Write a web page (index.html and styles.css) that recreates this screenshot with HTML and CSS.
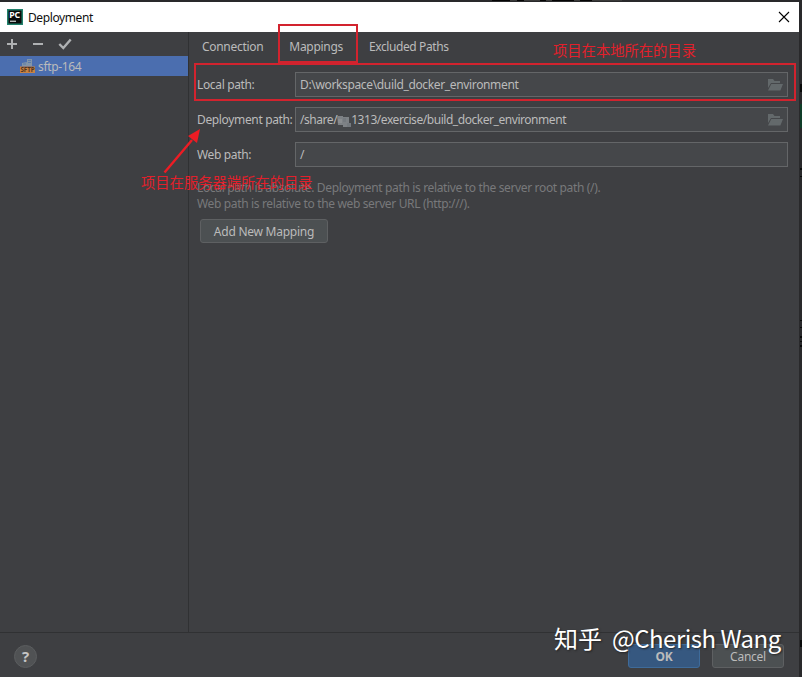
FILE: index.html
```
<!DOCTYPE html>
<html lang="en">
<head>
  <meta charset="UTF-8">
  <meta name="viewport" content="width=device-width, initial-scale=1.0">
  <title>Deployment</title>
  <link rel="stylesheet" href="styles.css">
</head>
<body>
  <div class="window">
    <header class="titlebar">
      <svg class="logo" width="16" height="16" viewBox="0 0 16 16">
        <rect width="16" height="16" fill="#21816c"/>
        <rect x="1.5" y="1.5" width="13" height="13" fill="#080c0b"/>
        <text class="logo-text" x="2.2" y="9" textLength="11" lengthAdjust="spacingAndGlyphs">PC</text>
        <rect x="3" y="11.7" width="6" height="1" fill="#fff"/>
      </svg>
      <h1>Deployment</h1>
      <svg class="close" width="12" height="12" viewBox="0 0 12 12">
        <path d="M1 1l10 10M11 1L1 11" stroke="#000" stroke-width="1.1"/>
      </svg>
    </header>
    <main class="content">
      <aside class="sidebar">
        <div class="toolbar">
          <svg width="12" height="12" viewBox="0 0 12 12"><path d="M6 1v10M1 6h10" stroke="#afb1b3" stroke-width="2"/></svg>
          <svg width="12" height="12" viewBox="0 0 12 12"><path d="M1 6h10" stroke="#afb1b3" stroke-width="2"/></svg>
          <svg width="14" height="12" viewBox="0 0 14 12"><path d="M1.3 6l4 4L12.7 1.5" fill="none" stroke="#afb1b3" stroke-width="2.4"/></svg>
        </div>
        <div class="server">
          <svg width="16" height="16" viewBox="0 0 16 16">
            <path d="M2 5l5-1v4H2zM7 1h5v7H7z" fill="#8295a8"/>
            <path d="M3 6h3M8 2.5h3M8 4.5h3" stroke="#5b7ba9"/>
            <rect y="8.5" width="15" height="6.5" fill="#c78243"/>
            <text class="sftp" x="0.4" y="14.1" textLength="14.2" lengthAdjust="spacingAndGlyphs">SFTP</text>
          </svg>
          <span>sftp-164</span>
        </div>
      </aside>
      <section class="panel">
        <nav class="tabs">
          <span class="tab">Connection</span>
          <span class="tab">Mappings</span>
          <span class="tab">Excluded Paths</span>
        </nav>
        <div class="form">
          <div class="row">
            <label>Local path:</label>
            <div class="field">
              <span>D:\workspace\duild_docker_environment</span>
              <svg width="15" height="12" viewBox="0 0 15 12"><path d="M0 0h5l1.5 2H12v2H3L0 9zM3.3 5H15l-2.6 6.5H0z" fill="#63696b"/></svg>
            </div>
          </div>
          <div class="row">
            <label>Deployment path:</label>
            <div class="field">
              <span class="remote">/share/<svg class="mosaic" width="14" height="13" viewBox="0 0 14 13"><path d="M0 1h6v1h6v10H6v-2H1z" fill="#7d8185"/><path d="M6 3h3v4H6zM10 8h4v4h-4z" fill="#74797e"/><path d="M1 4h4v4H1z" fill="#8a8d90"/></svg>1313/exercise/build_docker_environment</span>
              <svg width="15" height="12" viewBox="0 0 15 12"><path d="M0 0h5l1.5 2H12v2H3L0 9zM3.3 5H15l-2.6 6.5H0z" fill="#63696b"/></svg>
            </div>
          </div>
          <div class="row">
            <label>Web path:</label>
            <div class="field"><span>/</span></div>
          </div>
        </div>
        <p class="hint">Local path is absolute. Deployment path is relative to the server root path (/).<br>Web path is relative to the web server URL (http:///).</p>
        <button class="btn add">Add New Mapping</button>
      </section>
    </main>
    <footer class="footer">
      <button class="help">?</button>
      <button class="btn ok">OK</button>
      <button class="btn cancel">Cancel</button>
    </footer>
  </div>

  <!-- red notes drawn over the dialog -->
  <div class="mark mark-tab"></div>
  <div class="mark mark-row"></div>
  <span class="note note-local">项目在本地所在的目录</span>
  <span class="note note-server">项目在服务器端所在的目录</span>
  <svg class="arrow" width="44" height="48" viewBox="0 0 44 48">
    <path d="M4.5 44.5L32 12" stroke="#ed1c24" stroke-width="2.4"/>
    <path d="M40 1L37 15 28 8z" fill="#ed1c24"/>
  </svg>
  <span class="watermark"><span>知乎</span><span class="author">@Cherish Wang</span></span>

  <!-- pieces of the editor behind the dialog -->
  <svg class="behind behind-right" width="3" height="677" viewBox="0 0 3 677">
    <path d="M1 84h2v8H1zM1 168h2v2H1zM1 176h2v1H1zM1 320h2v1H1zM1 327h2v1H1zM1 336h2v2H1zM1 341h2v1H1zM1 345h2v2H1zM1 640h2v7H1z" fill="#090a0a"/>
    <path d="M1 104h2v24H1z" fill="#103e29"/>
  </svg>
  <svg class="behind behind-top" width="130" height="2" viewBox="0 0 130 2">
    <path d="M0 0h18v1H0zM25 0h7v1h-7zM48 0h6v1h-6zM60 0h22v1H60zM88 0h12v1H88z" fill="#050505"/>
    <path d="M18 0h7v1h-7zM32 0h16v1H32zM54 0h6v1h-6zM82 0h6v1h-6zM100 0h30v1h-30z" fill="#3a3a3a"/>
  </svg>
</body>
</html>
```
FILE: styles.css
```
* {
  margin: 0;
  padding: 0;
  box-sizing: border-box;
}

body {
  width: 802px;
  height: 677px;
  overflow: hidden;
  background-color: #29292b;
  font-family: "Noto Sans", "Noto Sans CJK SC", sans-serif;
  font-size: 12px;
  letter-spacing: -0.35px;
  color: #bbbbbb;
  padding-top: 2px;
}

svg {
  display: block;
  flex: none;
}

.window {
  display: flex;
  flex-direction: column;
  width: 799px;
  height: 675px;
  background-color: #3e3f42;
}

.titlebar {
  display: flex;
  align-items: center;
  height: 30px;
  padding: 0 9px 0 7px;
  background-color: #fff;
  color: #111;
}

.titlebar h1 {
  flex: 1;
  margin-left: 5px;
  font-size: 12px;
  font-weight: normal;
  letter-spacing: -0.4px;
}

.logo-text {
  font-size: 8px;
  font-weight: bold;
  letter-spacing: 0;
  fill: #fff;
}

.content {
  display: flex;
  flex: 1;
}

.sidebar {
  width: 189px;
  border-right: 1px solid #303133;
}

.toolbar {
  display: flex;
  align-items: center;
  gap: 14px;
  height: 24px;
  padding-left: 6px;
}

.server {
  display: flex;
  align-items: center;
  gap: 2px;
  height: 20px;
  padding-left: 20px;
  background-color: #4b6eaf;
}

.sftp {
  font-size: 6.5px;
  font-weight: bold;
  letter-spacing: 0;
  fill: #4e3521;
}

.panel {
  flex: 1;
  padding: 0 11px 0 8px;
}

.tabs {
  display: flex;
  height: 31px;
  padding-left: 5px;
  gap: 26px;
  line-height: 30px;
}

.tab {
  letter-spacing: -0.3px;
}

.tab:last-child {
  letter-spacing: -0.4px;
}

.form {
  display: flex;
  flex-direction: column;
  gap: 10px;
  padding-top: 9px;
}

.row {
  display: flex;
  align-items: center;
  height: 25px;
}

.row label {
  width: 98px;
  white-space: nowrap;
}

.field {
  display: flex;
  flex: 1;
  align-items: center;
  justify-content: space-between;
  height: 25px;
  padding: 0 4px;
  border: 1px solid #646668;
  background-color: #45474a;
}

.remote {
  letter-spacing: -0.45px;
}

.mosaic {
  display: inline-block;
  vertical-align: -4px;
}

.hint {
  padding-top: 13px;
  line-height: 16px;
  color: #78797b;
  white-space: nowrap;
}

.btn {
  height: 24px;
  border: 1px solid #5e6062;
  border-radius: 3px;
  background-color: #4c5052;
  color: #bbbbbb;
  font-family: inherit;
  font-size: 12px;
  letter-spacing: -0.25px;
}

.add {
  display: block;
  width: 128px;
  margin: 7px 0 0 3px;
}

.footer {
  display: flex;
  align-items: center;
  height: 45px;
  padding: 2px 15px 0 14px;
  border-top: 1px solid #303133;
}

.help {
  width: 23px;
  height: 23px;
  margin-right: auto;
  border: 1px solid #5b5d5f;
  border-radius: 50%;
  background-color: #505254;
  color: #c5c5c5;
  font: bold 15px/20px "Noto Sans", sans-serif;
}

.ok {
  width: 72px;
  margin-right: 12px;
  border-color: #3e6b9a;
  background-color: #365880;
  font-weight: bold;
}

.cancel {
  width: 72px;
}

.mark {
  position: absolute;
  border: 2px solid #d2232e;
}

.mark-tab {
  left: 278px;
  top: 24px;
  width: 80px;
  height: 39px;
}

.mark-row {
  left: 194px;
  top: 63px;
  width: 602px;
  height: 38px;
}

.note {
  position: absolute;
  font-family: "Noto Sans CJK SC", sans-serif;
  font-size: 14.3px;
  line-height: 20px;
  letter-spacing: 0;
  color: #e3202b;
  white-space: nowrap;
}

.note-local {
  left: 553px;
  top: 40px;
}

.note-server {
  left: 141px;
  top: 172px;
}

.arrow {
  position: absolute;
  left: 160px;
  top: 128px;
}

.watermark {
  position: absolute;
  left: 554px;
  top: 621px;
  display: flex;
  gap: 10px;
  font-family: "Noto Sans CJK SC", sans-serif;
  font-size: 24px;
  line-height: 34px;
  letter-spacing: 0;
  color: #fff;
  text-shadow: 1px 1px 2px #222;
  white-space: nowrap;
}

.author {
  letter-spacing: -0.5px;
}

.behind {
  position: absolute;
  top: 0;
}

.behind-right {
  left: 799px;
}

.behind-top {
  left: 492px;
}
```
